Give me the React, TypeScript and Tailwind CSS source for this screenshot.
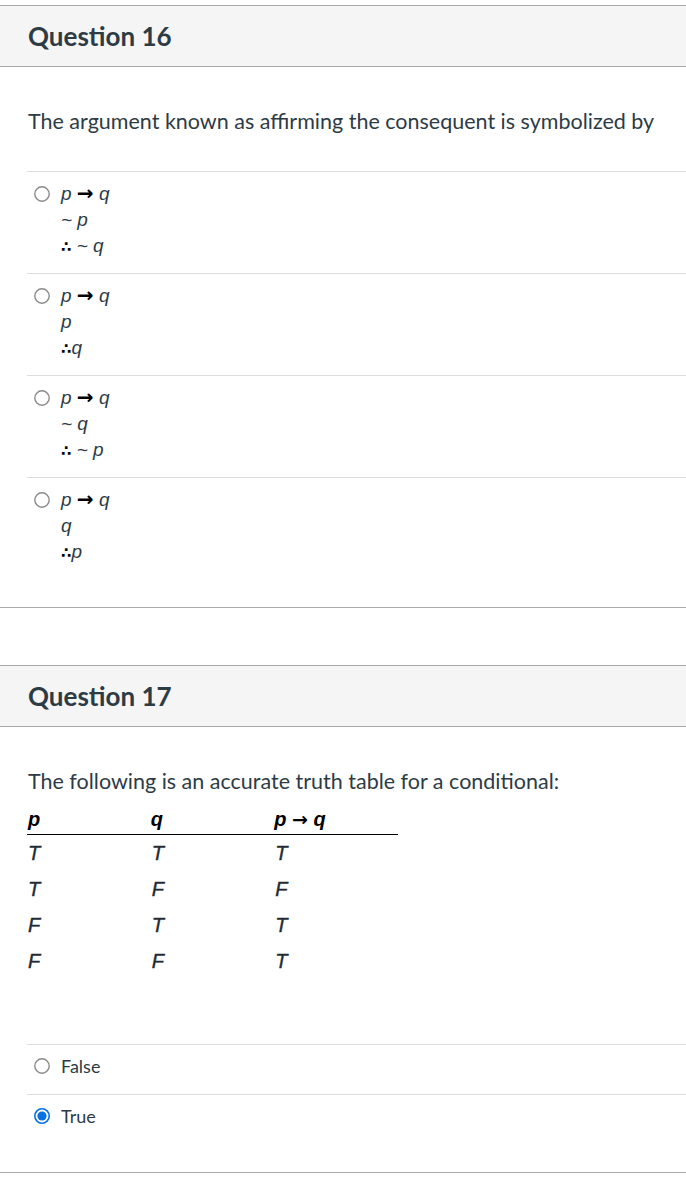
import React from 'react';

const lato = { fontFamily: 'Lato, "Noto Sans", sans-serif' };
const math = 'font-["Liberation_Sans",sans-serif] italic';

const Radio = ({ checked = false }: { checked?: boolean }) =>
  checked ? (
    <svg width="16" height="16" viewBox="0 0 16 16" className="shrink-0">
      <circle cx="8" cy="8" r="7.2" fill="#fff" stroke="#0770e3" strokeWidth="1.6" />
      <circle cx="8" cy="8" r="4.6" fill="#0770e3" />
    </svg>
  ) : (
    <svg width="16" height="16" viewBox="0 0 16 16" className="shrink-0">
      <circle cx="8" cy="8" r="7.2" fill="#fff" stroke="#8a8a8a" strokeWidth="1.4" />
    </svg>
  );

const Arrow = () => (
  <span className='not-italic font-bold text-black font-["DejaVu_Sans",sans-serif] text-[20px] leading-none'>→</span>
);

const Therefore = () => (
  <span className='not-italic font-bold text-black font-["DejaVu_Sans",sans-serif] text-[15px] leading-none'>∴</span>
);

type Argument = { lines: React.ReactNode[] };

const q16: Argument[] = [
  { lines: [<>p <Arrow /> q</>, <>~ p</>, <><Therefore /> ~ q</>] },
  { lines: [<>p <Arrow /> q</>, <>p</>, <><Therefore />q</>] },
  { lines: [<>p <Arrow /> q</>, <>~ q</>, <><Therefore /> ~ p</>] },
  { lines: [<>p <Arrow /> q</>, <>q</>, <><Therefore />p</>] },
];

const rows = [
  ['T', 'T', 'T'],
  ['T', 'F', 'F'],
  ['F', 'T', 'T'],
  ['F', 'F', 'T'],
];

const Header = ({ title }: { title: string }) => (
  <div className="h-[61px] bg-[#f5f5f5] border-b border-[#aaaaaa] px-7 flex items-center">
    <h2 className="text-[26px] font-bold text-[#2d3b45] leading-none">{title}</h2>
  </div>
);

export default function App() {
  return (
    <div className="min-h-screen bg-white pt-[5px] text-[#2d3b45]" style={lato}>
      {/* Question 16 */}
      <section className="border-y border-[#aaaaaa]">
        <Header title="Question 16" />
        <div className="pt-[40px] pb-[28px]">
          <p className="px-7 text-[21.5px] leading-[28px] whitespace-nowrap">
            The argument known as affirming the consequent is symbolized by
          </p>
          <div className="ml-[27px] mt-[36px]">
            {q16.map((a, i) => (
              <div key={i} className="border-t border-[#dddddd] pt-[9px] pb-[14px] pl-[7px] flex">
                <div className="h-[26px] flex items-center">
                  <Radio />
                </div>
                <div className={`ml-[11px] ${math} text-[19px] text-[#2d3b45]`}>
                  {a.lines.map((l, j) => (
                    <div key={j} className="h-[26px] leading-[26px] overflow-visible">
                      {l}
                    </div>
                  ))}
                </div>
              </div>
            ))}
          </div>
        </div>
      </section>

      {/* Question 17 */}
      <section className="mt-[57px] border-y border-[#aaaaaa]">
        <Header title="Question 17" />
        <div className="pt-[40px] pb-[28px]">
          <p className="px-7 text-[21.5px] leading-[28px]">
            The following is an accurate truth table for a conditional:
          </p>
          <div className={`ml-[27px] mt-[8px] w-[371px] ${math} text-[20px] text-[#1f2a33]`}>
            <div className="grid grid-cols-3 h-[32px] items-center border-b-[1.5px] border-black font-bold text-black">
              <span className="pl-px">p</span>
              <span>q</span>
              <span>
                p <span className='not-italic font-["DejaVu_Sans",sans-serif] text-[19px] leading-none'>→</span> q
              </span>
            </div>
            {rows.map((r, i) => (
              <div key={i} className="grid grid-cols-3 h-[36px] items-center">
                {r.map((c, j) => (
                  <span key={j} className="pl-px [-webkit-text-stroke:0.4px_#1f2a33]">
                    {c}
                  </span>
                ))}
              </div>
            ))}
          </div>
          <div className="ml-[27px] mt-[65px]">
            {['False', 'True'].map((label) => (
              <div key={label} className="border-t border-[#dddddd] pt-[8px] pb-[15px] pl-[7px] flex items-center">
                <div className="h-[26px] flex items-center">
                  <Radio checked={label === 'True'} />
                </div>
                <span className="ml-[11px] text-[18px] leading-[26px]">{label}</span>
              </div>
            ))}
          </div>
        </div>
      </section>
    </div>
  );
}
